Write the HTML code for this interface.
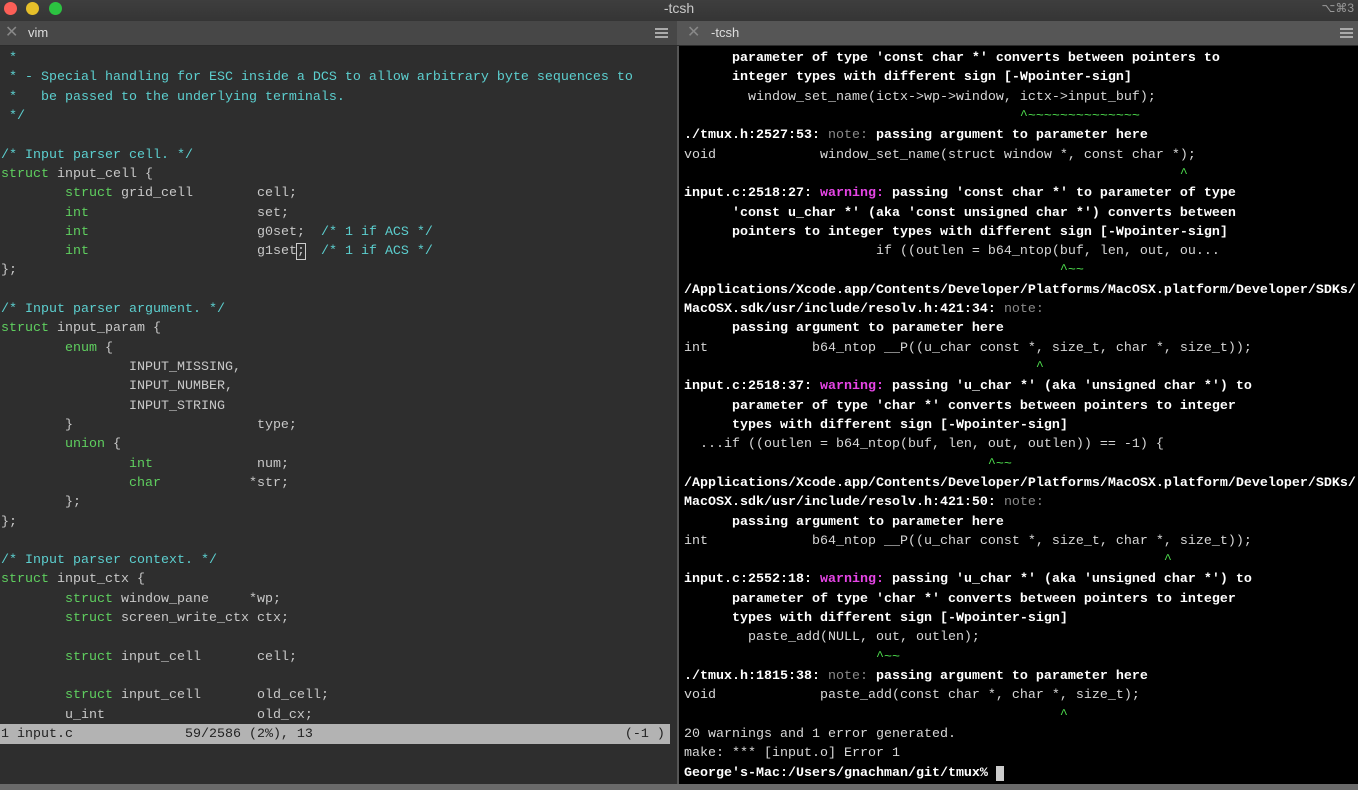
<!DOCTYPE html>
<html><head><meta charset="utf-8"><style>
*{margin:0;padding:0;box-sizing:border-box}
body{width:1358px;height:790px;overflow:hidden;background:#2b2b2b;font-family:"Liberation Sans",sans-serif;position:relative}
#title{position:absolute;left:0;top:0;width:1358px;height:21px;background:linear-gradient(#3e3e3e,#353535);color:#c8c8c8;font-size:14px;text-align:center;line-height:17px}
.dot{position:absolute;top:2px;width:13px;height:13px;border-radius:50%}
#tabs{position:absolute;top:21px;left:0;width:1358px;height:24px;border-bottom:1px solid #666}
.tab{position:absolute;top:0;height:24px;color:#ddd;font-size:13px;line-height:24px}
.pre{position:absolute;font-family:"Liberation Mono",monospace;font-size:13.33px;line-height:19.32px;white-space:pre;letter-spacing:0px}
#left{left:1px;top:49px;color:#c8c8c8}
#right{left:684px;top:49px;color:#fff;font-weight:bold}
.c{color:#5ccfcf}.k{color:#5fcf5f}
.w{color:#e645e6}.n{color:#8a8a8a;font-weight:normal}.g{color:#4ee04e;font-weight:normal}.s{color:#d8d8d8;font-weight:normal}
.ham{position:absolute;width:13px;height:2px;background:#aaa;box-shadow:0 4px #aaa,0 8px #aaa}
</style></head><body>
<div id="title">-tcsh
<div class="dot" style="left:4px;background:#fc5f57"></div>
<div class="dot" style="left:26px;background:#e6bf2a"></div>
<div class="dot" style="left:49px;background:#2cc341"></div>
<span style="position:absolute;right:4px;top:0;color:#999;font-size:12px">⌥⌘3</span>
</div>
<div id="tabs">
<div class="tab" style="left:0;width:677px;background:#474747"><span style="position:absolute;left:5px;color:#888;font-size:16px">✕</span><span style="position:absolute;left:28px">vim</span><div class="ham" style="left:655px;top:7px"></div></div>
<div class="tab" style="left:677px;width:681px;background:#565656"><span style="position:absolute;left:10px;color:#888;font-size:16px">✕</span><span style="position:absolute;left:34px">-tcsh</span><div class="ham" style="left:663px;top:7px"></div></div>
</div>
<div style="position:absolute;left:0;top:46px;width:677px;height:738px;background:#2e2e2e"></div>
<div style="position:absolute;left:677px;top:46px;width:2px;height:738px;background:#555"></div>
<div style="position:absolute;left:679px;top:46px;width:679px;height:738px;background:#000"></div>
<div style="position:absolute;left:0;top:784px;width:1358px;height:6px;background:#6a6a6a"></div>
<div style="position:absolute;left:0;top:724px;width:670px;height:20px;background:#b3b3b3"></div>
<div class="pre" id="left"><span class="c"> *
 * - Special handling for ESC inside a DCS to allow arbitrary byte sequences to
 *   be passed to the underlying terminals.
 */</span>

<span class="c">/* Input parser cell. */</span>
<span class="k">struct</span> input_cell {
        <span class="k">struct</span> grid_cell        cell;
        <span class="k">int</span>                     set;
        <span class="k">int</span>                     g0set;  <span class="c">/* 1 if ACS */</span>
        <span class="k">int</span>                     g1set<span style="outline:1px solid #ccc">;</span>  <span class="c">/* 1 if ACS */</span>
};

<span class="c">/* Input parser argument. */</span>
<span class="k">struct</span> input_param {
        <span class="k">enum</span> {
                INPUT_MISSING,
                INPUT_NUMBER,
                INPUT_STRING
        }                       type;
        <span class="k">union</span> {
                <span class="k">int</span>             num;
                <span class="k">char</span>           *str;
        };
};

<span class="c">/* Input parser context. */</span>
<span class="k">struct</span> input_ctx {
        <span class="k">struct</span> window_pane     *wp;
        <span class="k">struct</span> screen_write_ctx ctx;

        <span class="k">struct</span> input_cell       cell;

        <span class="k">struct</span> input_cell       old_cell;
        u_int                   old_cx;
<span style="color:#222">1 input.c              59/2586 (2%), 13                                       (-1 )</span></div>
<div class="pre" id="right">      parameter of type 'const char *' converts between pointers to
      integer types with different sign [-Wpointer-sign]
<span class="s">        window_set_name(ictx-&gt;wp-&gt;window, ictx-&gt;input_buf);</span>
<span class="g">                                          ^~~~~~~~~~~~~~~</span>
./tmux.h:2527:53: <span class="n">note:</span> passing argument to parameter here
<span class="s">void             window_set_name(struct window *, const char *);</span>
<span class="g">                                                              ^</span>
input.c:2518:27: <span class="w">warning:</span> passing 'const char *' to parameter of type
      'const u_char *' (aka 'const unsigned char *') converts between
      pointers to integer types with different sign [-Wpointer-sign]
<span class="s">                        if ((outlen = b64_ntop(buf, len, out, ou...</span>
<span class="g">                                               ^~~</span>
/Applications/Xcode.app/Contents/Developer/Platforms/MacOSX.platform/Developer/SDKs/
MacOSX.sdk/usr/include/resolv.h:421:34: <span class="n">note:</span>
      passing argument to parameter here
<span class="s">int             b64_ntop __P((u_char const *, size_t, char *, size_t));</span>
<span class="g">                                            ^</span>
input.c:2518:37: <span class="w">warning:</span> passing 'u_char *' (aka 'unsigned char *') to
      parameter of type 'char *' converts between pointers to integer
      types with different sign [-Wpointer-sign]
<span class="s">  ...if ((outlen = b64_ntop(buf, len, out, outlen)) == -1) {</span>
<span class="g">                                      ^~~</span>
/Applications/Xcode.app/Contents/Developer/Platforms/MacOSX.platform/Developer/SDKs/
MacOSX.sdk/usr/include/resolv.h:421:50: <span class="n">note:</span>
      passing argument to parameter here
<span class="s">int             b64_ntop __P((u_char const *, size_t, char *, size_t));</span>
<span class="g">                                                            ^</span>
input.c:2552:18: <span class="w">warning:</span> passing 'u_char *' (aka 'unsigned char *') to
      parameter of type 'char *' converts between pointers to integer
      types with different sign [-Wpointer-sign]
<span class="s">        paste_add(NULL, out, outlen);</span>
<span class="g">                        ^~~</span>
./tmux.h:1815:38: <span class="n">note:</span> passing argument to parameter here
<span class="s">void             paste_add(const char *, char *, size_t);</span>
<span class="g">                                               ^</span>
<span class="s">20 warnings and 1 error generated.
make: *** [input.o] Error 1</span>
George's-Mac:/Users/gnachman/git/tmux% <span style="background:#ccc"> </span></div>
</body></html>
